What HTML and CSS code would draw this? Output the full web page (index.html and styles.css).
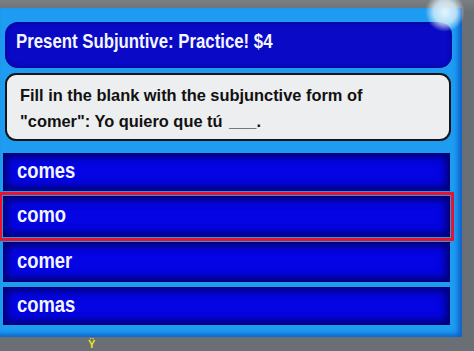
FILE: index.html
```html
<!DOCTYPE html>
<html lang="es">
<head>
<meta charset="utf-8">
<title>Present Subjuntive: Practice!</title>
<link rel="stylesheet" href="styles.css">
</head>
<body>
<div class="screen">
  <div class="panel">
    <div class="title"><span class="title-text">Present Subjuntive: Practice! $4</span></div>
    <div class="question">Fill in the blank with the subjunctive form of<br>"comer": Yo quiero que tú <span class="blank">___</span>.</div>
    <div class="answers">
      <div class="answer a1"><span class="answer-text">comes</span></div>
      <div class="answer a2 selected"><span class="answer-text">como</span></div>
      <div class="answer a3"><span class="answer-text">comer</span></div>
      <div class="answer a4"><span class="answer-text">comas</span></div>
    </div>
  </div>
  <div class="footer"><span class="footer-text">Ÿ</span></div>
  <div class="glare"></div>
</div>
</body>
</html>
```
FILE: styles.css
```css
html, body {
  margin: 0;
  padding: 0;
}
body {
  width: 474px;
  height: 351px;
  overflow: hidden;
  background: #6a6f75;
  font-family: "Liberation Sans", Arial, sans-serif;
  font-weight: bold;
}
.screen {
  position: relative;
  width: 474px;
  height: 351px;
  padding-top: 8px;
  box-sizing: border-box;
  background: linear-gradient(#7b7f83, #6a6f75 12px);
}
.panel {
  width: 462px;
  height: 329px;
  box-sizing: border-box;
  background: #1d9cf1;
  padding-top: 14px;
  display: flex;
  flex-direction: column;
  box-shadow: inset -4px -3px 5px rgba(0, 50, 170, 0.55);
}
.title {
  margin-left: 5px;
  width: 447px;
  height: 46px;
  box-sizing: border-box;
  border-radius: 13px;
  background: #0909c6;
  box-shadow: inset 0 0 4px rgba(0, 0, 90, 0.7);
  display: flex;
  align-items: center;
  padding-left: 11px;
  padding-bottom: 6px;
}
.title-text {
  display: inline-block;
  color: #f4f6ff;
  font-size: 16.8px;
  transform: scaleY(1.15);
}
.question {
  margin-top: 5px;
  margin-left: 5px;
  width: 446px;
  height: 68px;
  box-sizing: border-box;
  border: 2px solid #121418;
  border-radius: 11px;
  background: #eceef0;
  color: #111;
  font-size: 16.4px;
  line-height: 26px;
  padding: 7px 0 0 13px;
}
.blank {
  display: inline-block;
  margin-left: 2px;
}
.answers {
  margin-top: 12px;
  margin-left: 3px;
  width: 447px;
  display: flex;
  flex-direction: column;
  gap: 5px;
}
.answer {
  box-sizing: border-box;
  background: #0404e4;
  border: 1px solid #00006a;
  box-shadow: inset 0 0 8px 3px rgba(0, 0, 70, 0.75);
  display: flex;
  align-items: center;
  padding-left: 13px;
  padding-bottom: 3px;
}
.a1 { height: 38px; }
.a2 { height: 41px; }
.a3 { height: 40px; }
.a4 { height: 38px; }
.selected {
  outline: 3px solid #f0102c;
  outline-offset: 1px;
}
.answer-text {
  display: inline-block;
  color: #f2f4ff;
  font-size: 18.4px;
  transform: scaleY(1.2);
}
.footer {
  height: 14px;
  padding-left: 88px;
}
.footer-text {
  display: block;
  color: #f0e020;
  font-size: 11px;
  line-height: 11px;
  margin-top: 2px;
}
.glare {
  position: absolute;
  left: 425px;
  top: -8px;
  width: 40px;
  height: 40px;
  border-radius: 50%;
  background: radial-gradient(circle, rgba(235, 250, 255, 0.95) 0%, rgba(220, 240, 250, 0.8) 40%, rgba(200, 230, 245, 0) 70%);
}
```
